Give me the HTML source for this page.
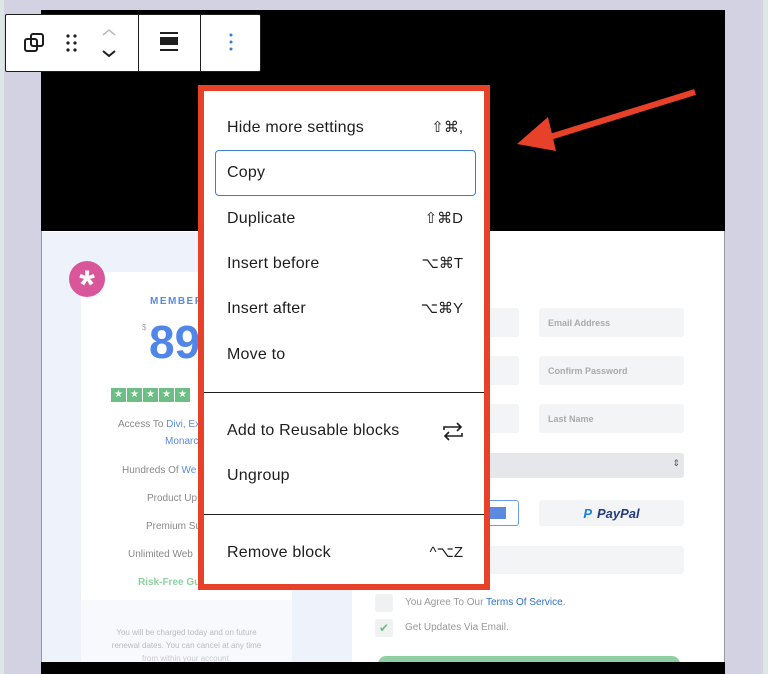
<!DOCTYPE html>
<html><head><meta charset="utf-8"><style>
*{margin:0;padding:0;box-sizing:border-box}
body{width:768px;height:674px;overflow:hidden;background:#d3d2e3;position:relative;font-family:"Liberation Sans",sans-serif}
.a{position:absolute}
.item{position:absolute;left:227px;font-size:16px;color:#1e1e1e;letter-spacing:0.2px}
.sc{position:absolute;right:305px;font-size:15px;color:#1e1e1e;text-align:right;margin-top:-1px}
.inp{position:absolute;background:#f3f4f6;border-radius:3px;font-size:9px;color:#aaa;padding:0 9px;display:flex;align-items:center;font-weight:bold}
.ft{position:absolute;font-size:10px;color:#999;text-align:center;width:211px;left:81px}
</style></head><body>
<div class="a" style="left:0;top:0;width:4px;height:674px;background:#dde8e4"></div>
<div class="a" style="left:763px;top:0;width:5px;height:674px;background:#dde8e4"></div>
<div class="a" style="left:41px;top:10px;width:684px;height:664px;background:#fff;border:1px solid #999"></div>
<div class="a" style="left:41px;top:10px;width:684px;height:221px;background:#000"></div>
<div class="a" style="left:42px;top:232px;width:310px;height:430px;background:#eef2fb"></div>
<div class="a" style="left:81px;top:272px;width:211px;height:390px;background:#fff"></div>
<div class="a" style="left:81px;top:600px;width:211px;height:62px;background:#f8f9fc"></div>
<div class="a" style="left:69px;top:261px;width:36px;height:36px;border-radius:50%;background:#d9569a;color:#fff;font-size:40px;font-weight:bold;text-align:center;line-height:48px">*</div>
<div class="a" style="left:150px;top:296px;font-size:10px;color:#5b8ae0;letter-spacing:1.5px;font-weight:bold">MEMBER</div>
<div class="a" style="left:142px;top:323px;font-size:8px;color:#aaa">$</div>
<div class="a" style="left:149px;top:316px;font-size:46px;color:#4f86e8;line-height:52px;font-weight:bold">89</div>
<div class="a" style="left:111px;top:388px;display:flex;gap:1px">
<div style="width:15px;height:14px;background:#6cbf84;color:#fff;font-size:10px;text-align:center;line-height:14px">★</div><div style="width:15px;height:14px;background:#6cbf84;color:#fff;font-size:10px;text-align:center;line-height:14px">★</div><div style="width:15px;height:14px;background:#6cbf84;color:#fff;font-size:10px;text-align:center;line-height:14px">★</div><div style="width:15px;height:14px;background:#6cbf84;color:#fff;font-size:10px;text-align:center;line-height:14px">★</div><div style="width:15px;height:14px;background:#6cbf84;color:#fff;font-size:10px;text-align:center;line-height:14px">★</div></div>
<div class="a" style="left:118px;top:419px;font-size:10px;color:#888">Access To <span style="color:#5b8ae0">Divi, Ex</span></div>
<div class="a" style="left:165px;top:436px;font-size:10px;color:#5b8ae0">Monarc</div>
<div class="a" style="left:122px;top:465px;font-size:10px;color:#888">Hundreds Of <span style="color:#5b8ae0">We</span></div>
<div class="a" style="left:147px;top:493px;font-size:10px;color:#888">Product Up</div>
<div class="a" style="left:146px;top:521px;font-size:10px;color:#888">Premium Su</div>
<div class="a" style="left:128px;top:549px;font-size:10px;color:#888">Unlimited Web</div>
<div class="a" style="left:138px;top:577px;font-size:10px;color:#8fd0a2;font-weight:bold">Risk-Free Gu</div>
<div class="ft" style="top:628px;font-size:8px;color:#bbb">You will be charged today and on future</div>
<div class="ft" style="top:641px;font-size:8px;color:#bbb">renewal dates. You can cancel at any time</div>
<div class="ft" style="top:654px;font-size:8px;color:#ccc">from within your account.</div>
<div class="inp" style="left:484px;top:308px;width:35px;height:29px"></div>
<div class="inp" style="left:539px;top:308px;width:145px;height:29px">Email Address</div>
<div class="inp" style="left:484px;top:356px;width:35px;height:29px"></div>
<div class="inp" style="left:539px;top:356px;width:145px;height:29px">Confirm Password</div>
<div class="inp" style="left:484px;top:404px;width:35px;height:29px"></div>
<div class="inp" style="left:539px;top:404px;width:145px;height:29px">Last Name</div>
<div class="a" style="left:484px;top:453px;width:200px;height:25px;background:#e6e7ea;border-radius:3px"><span style="position:absolute;right:4px;top:5px;font-size:9px;color:#555">⇕</span></div>
<div class="a" style="left:484px;top:500px;width:35px;height:26px;border:1px solid #6a9be8;border-radius:3px;background:#fff"><div style="position:absolute;left:5px;top:6px;width:16px;height:12px;background:#5b8ae0"></div></div>
<div class="inp" style="left:539px;top:500px;width:145px;height:26px;justify-content:center;font-size:13px;font-style:italic;color:#253b80;font-weight:bold"><span style="color:#1d7ed8;margin-right:5px">P</span>PayPal</div>
<div class="inp" style="left:484px;top:546px;width:200px;height:28px"></div>
<div class="a" style="left:375px;top:594px;width:18px;height:18px;background:#f0f1f3;border-radius:3px"></div>
<div class="a" style="left:375px;top:619px;width:18px;height:18px;background:#f0f1f3;border-radius:3px;color:#6cbf84;font-size:12px;text-align:center;line-height:18px">✔</div>
<div class="a" style="left:405px;top:597px;font-size:10px;color:#999">You Agree To Our <span style="color:#2d6fc7">Terms Of Service</span>.</div>
<div class="a" style="left:405px;top:622px;font-size:10px;color:#999">Get Updates Via Email.</div>
<div class="a" style="left:378px;top:656px;width:302px;height:12px;background:#8fd0a2;border-radius:8px 8px 0 0"></div>
<div class="a" style="left:41px;top:662px;width:684px;height:12px;background:#000"></div>
<svg class="a" style="left:0;top:0" width="768" height="674"><line x1="695" y1="92" x2="550" y2="137" stroke="#e8412a" stroke-width="6"/><polygon points="517,144 548,117 556,151" fill="#e8412a"/></svg>
<div class="a" style="left:5px;top:14px;width:256px;height:58px;background:#fff;border:1px solid #1e1e1e;border-radius:2px"></div>
<div class="a" style="left:138px;top:14px;width:1px;height:58px;background:#1e1e1e"></div>
<div class="a" style="left:200px;top:14px;width:1px;height:58px;background:#1e1e1e"></div>
<svg class="a" style="left:0;top:0" width="270" height="80">
<rect x="25" y="39" width="12" height="12" rx="2" fill="none" stroke="#1e1e1e" stroke-width="2"/>
<rect x="31" y="34" width="12" height="12" rx="2" fill="none" stroke="#1e1e1e" stroke-width="2"/>
<g fill="#1e1e1e"><circle cx="68" cy="36" r="1.6"/><circle cx="75" cy="36" r="1.6"/><circle cx="68" cy="43" r="1.6"/><circle cx="75" cy="43" r="1.6"/><circle cx="68" cy="50" r="1.6"/><circle cx="75" cy="50" r="1.6"/></g>
<path d="M103 35 L109 30 L115 35" fill="none" stroke="#bbb" stroke-width="1.5"/>
<path d="M103 51 L109 56 L115 51" fill="none" stroke="#1e1e1e" stroke-width="2"/>
<rect x="160" y="32" width="18" height="2" fill="#1e1e1e"/><rect x="160" y="37" width="18" height="8" fill="#1e1e1e"/><rect x="160" y="49" width="18" height="2" fill="#1e1e1e"/>
<g fill="#3a7bd5"><circle cx="231" cy="35" r="1.5"/><circle cx="231" cy="42" r="1.5"/><circle cx="231" cy="49" r="1.5"/></g>
</svg>
<div class="a" style="left:198px;top:85px;width:292px;height:505px;background:#fff;border:6px solid #e8412a"></div>
<div class="a" style="left:215px;top:150px;width:261px;height:46px;border:1.5px solid #3a7bd5;border-radius:4px"></div>
<div class="a" style="left:204px;top:392px;width:280px;height:1px;background:#1e1e1e"></div>
<div class="a" style="left:204px;top:514px;width:280px;height:1px;background:#1e1e1e"></div>
<div class="item" style="top:119px">Hide more settings</div><div class="sc" style="top:119px">⇧⌘,</div>
<div class="item" style="top:164px">Copy</div>
<div class="item" style="top:210px">Duplicate</div><div class="sc" style="top:210px">⇧⌘D</div>
<div class="item" style="top:255px">Insert before</div><div class="sc" style="top:255px">⌥⌘T</div>
<div class="item" style="top:300px">Insert after</div><div class="sc" style="top:300px">⌥⌘Y</div>
<div class="item" style="top:346px">Move to</div>
<div class="item" style="top:422px">Add to Reusable blocks</div>
<svg class="a" style="left:440px;top:419px" width="26" height="26"><path d="M4 11 V8 H20 M17 4 L21 8 L17 12 M22 14 V17 H6 M9 13 L5 17 L9 21" fill="none" stroke="#1e1e1e" stroke-width="1.6"/></svg>
<div class="item" style="top:467px">Ungroup</div>
<div class="item" style="top:544px">Remove block</div><div class="sc" style="top:544px">^⌥Z</div>
</body></html>
